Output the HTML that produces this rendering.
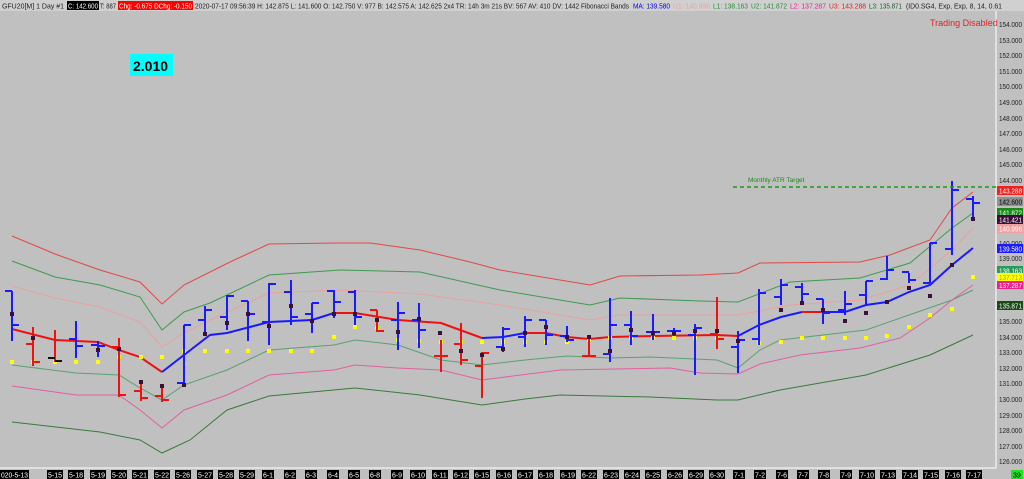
<!DOCTYPE html>
<html><head><meta charset="utf-8"><style>
body{margin:0;width:1024px;height:479px;overflow:hidden;background:#c0c0c0;font-family:"Liberation Sans",sans-serif}
svg{display:block}
</style></head><body>
<svg width="1024" height="479" viewBox="0 0 1024 479" xmlns="http://www.w3.org/2000/svg" font-family="Liberation Sans, sans-serif">
<rect width="1024" height="479" fill="#c0c0c0"/>
<rect width="1024" height="11" fill="#d0d0d0"/>
<g font-size="7.4" fill="#222" lengthAdjust="spacingAndGlyphs">
<text x="2" y="8.5" textLength="62" lengthAdjust="spacingAndGlyphs">GFU20[M]  1 Day  #1</text>
<rect x="67" y="1" width="32" height="9" fill="#000"/><text x="68" y="8.5" fill="#fff" textLength="30" lengthAdjust="spacingAndGlyphs">C: 142.600</text>
<text x="100" y="8.5" textLength="16" lengthAdjust="spacingAndGlyphs">T: 887</text>
<rect x="118" y="1" width="75" height="9" fill="#f00"/><text x="119" y="8.5" fill="#fff" textLength="73" lengthAdjust="spacingAndGlyphs">Chg: -0.675  DChg: -0.150</text>
<text x="195" y="8.5" textLength="434" lengthAdjust="spacingAndGlyphs">2020-07-17 09:56:39 H: 142.875 L: 141.600 O: 142.750 V: 977 B: 142.575 A: 142.625 2x4 TR: 14h 3m 21s BV: 567 AV: 410 DV: 1442 Fibonacci Bands</text>
<text x="633" y="8.5" fill="#0000e0" textLength="37" lengthAdjust="spacingAndGlyphs">MA: 139.580</text>
<text x="673" y="8.5" fill="#f0a0a0" textLength="37" lengthAdjust="spacingAndGlyphs">U1: 140.996</text>
<text x="713" y="8.5" fill="#2a8a3a" textLength="35" lengthAdjust="spacingAndGlyphs">L1: 138.163</text>
<text x="751" y="8.5" fill="#2a8a3a" textLength="36" lengthAdjust="spacingAndGlyphs">U2: 141.872</text>
<text x="790" y="8.5" fill="#e0208a" textLength="36" lengthAdjust="spacingAndGlyphs">L2: 137.287</text>
<text x="829" y="8.5" fill="#e02020" textLength="37" lengthAdjust="spacingAndGlyphs">U3: 143.288</text>
<text x="869" y="8.5" fill="#1a5a2a" textLength="33" lengthAdjust="spacingAndGlyphs">L3: 135.871</text>
<text x="906" y="8.5" textLength="96" lengthAdjust="spacingAndGlyphs">(ID0.SG4, Exp, Exp, 8, 14, 0.61</text>
</g>
<line x1="996" y1="11" x2="996" y2="468" stroke="#fff"/>
<line x1="0" y1="468" x2="996" y2="468" stroke="#fff"/>
<text x="930" y="26" font-size="9" fill="#e02020">Trading Disabled</text>
<rect x="130" y="54" width="43" height="22" fill="#00ffff"/>
<text x="133" y="71" font-size="14" font-weight="bold" fill="#000">2.010</text>
<g fill="none" stroke-width="1">
<polyline stroke="#e04848" points="12,236 55,254 100,270 140,282 162,304 184,285 230,262 269,244 335,243 370,243 420,250 470,262 500,270 590,285 620,276 700,275 738,273 760,263 860,262 890,255 930,240 952,208 973,192"/>
<polyline stroke="#3e9a50" points="12,261 55,277 100,285 140,297 162,330 184,312 210,303 269,275 340,270 420,272 500,290 590,305 620,298 700,301 738,302 790,282 860,278 910,263 952,228 973,213"/>
<polyline stroke="#eaa0a0" points="12,286 55,298 100,307 140,322 162,347 184,333 210,320 269,293 340,290 420,294 500,305 590,320 620,315 700,315 738,315 790,305 860,300 910,285 952,250 973,228"/>
<polyline stroke="#5aa070" points="12,365 76,373 119,375 140,388 162,400 184,385 227,370 269,350 334,345 355,340 398,345 441,360 482,365 525,360 567,356 610,358 650,357 717,360 738,368 760,350 780,340 823,335 866,330 909,315 952,300 973,290"/>
<polyline stroke="#e060a0" points="12,386 76,395 119,395 140,410 162,428 184,410 227,395 269,375 334,370 355,365 398,368 441,370 482,380 560,370 670,368 700,373 738,374 760,364 800,355 860,348 900,338 930,318 952,300 973,285"/>
<polyline stroke="#3a7a3a" points="12,422 100,432 140,440 162,453 190,440 227,410 269,396 355,388 420,395 482,405 525,399 560,395 650,397 717,400 738,400 780,390 866,375 930,355 973,335"/>
</g>
<g fill="none" stroke-width="2">
<polyline stroke="#f01010" points="12,329 55,340 98,342 119,350 140,357 162,372"/>
<polyline stroke="#1a1aff" points="162,372 184,355 210,335 227,333 269,322 312,320 334,313"/>
<polyline stroke="#f01010" points="334,313 355,313 398,320 441,323 482,338"/>
<polyline stroke="#1a1aff" points="482,338 503,337 525,333"/>
<polyline stroke="#f01010" points="525,333 546,333 567,337 589,339 610,337 653,336 717,335 738,336"/>
<polyline stroke="#1a1aff" points="738,336 759,325 781,317 802,312"/>
<polyline stroke="#f01010" points="802,312 823,312"/>
<polyline stroke="#1a1aff" points="823,312 845,312 866,305 887,302 909,292 930,285 952,265 973,248"/>
</g>
<g fill="#ffff00">
<rect x="10" y="360" width="4" height="4"/><rect x="31" y="360" width="4" height="4"/><rect x="53" y="360" width="4" height="4"/><rect x="74" y="360" width="4" height="4"/><rect x="96" y="360" width="4" height="4"/><rect x="117" y="355" width="4" height="4"/><rect x="139" y="355" width="4" height="4"/><rect x="160" y="355" width="4" height="4"/><rect x="182" y="349" width="4" height="4"/><rect x="203" y="349" width="4" height="4"/><rect x="225" y="349" width="4" height="4"/><rect x="246" y="349" width="4" height="4"/><rect x="267" y="349" width="4" height="4"/><rect x="289" y="349" width="4" height="4"/><rect x="310" y="349" width="4" height="4"/><rect x="332" y="335" width="4" height="4"/><rect x="353" y="325" width="4" height="4"/><rect x="375" y="326" width="4" height="4"/><rect x="396" y="338" width="4" height="4"/><rect x="417" y="339" width="4" height="4"/><rect x="439" y="340" width="4" height="4"/><rect x="459" y="340" width="4" height="4"/><rect x="480" y="340" width="4" height="4"/><rect x="501" y="340" width="4" height="4"/><rect x="523" y="340" width="4" height="4"/><rect x="544" y="340" width="4" height="4"/><rect x="565" y="340" width="4" height="4"/><rect x="587" y="338" width="4" height="4"/><rect x="608" y="336" width="4" height="4"/><rect x="629" y="336" width="4" height="4"/><rect x="651" y="336" width="4" height="4"/><rect x="672" y="336" width="4" height="4"/><rect x="693" y="336" width="4" height="4"/><rect x="715" y="336" width="4" height="4"/><rect x="736" y="339" width="4" height="4"/><rect x="757" y="341" width="4" height="4"/><rect x="779" y="340" width="4" height="4"/><rect x="800" y="336" width="4" height="4"/><rect x="821" y="336" width="4" height="4"/><rect x="843" y="336" width="4" height="4"/><rect x="864" y="336" width="4" height="4"/><rect x="885" y="334" width="4" height="4"/><rect x="907" y="325" width="4" height="4"/><rect x="928" y="313" width="4" height="4"/><rect x="950" y="307" width="4" height="4"/><rect x="971" y="275" width="4" height="4"/>
</g>
<g stroke-width="2" fill="none">
<path stroke="#1a1aff" d="M12 291V341M5 291H12M12 325H19 M76 321V358M69 339H76M76 346H83 M98 341V357M91 345H98M98 346H105 M184 325V385M177 383H184M184 325H191 M205 306V335M198 320H205M205 310H212 M227 295V330M220 317H227M227 296H234 M248 301V341M241 301H248M248 314H255 M269 283V345M262 322H269M269 284H276 M291 280V325M284 292H291M291 317H298 M312 303V333M305 314H312M312 303H319 M334 290V318M327 291H334M334 302H341 M355 290V325M348 292H355M355 317H362 M398 302V350M391 320H398M398 313H405 M419 303V348M412 320H419M419 330H426 M503 327V352M496 347H503M503 329H510 M525 316V347M518 337H525M525 320H532 M546 320V345M539 320H546M546 335H553 M567 326V342M560 336H567M567 340H574 M610 298V362M603 354H610M610 325H617 M631 311V345M624 325H631M631 336H638 M653 314V340M646 332H653M653 332H660 M674 328V336M667 331H674M674 331H681 M695 324V375M688 335H695M695 328H702 M738 331V373M731 347H738M738 340H745 M759 289V345M752 339H759M759 293H766 M781 279V305M774 297H781M781 285H788 M802 283V305M795 287H802M802 294H809 M823 299V324M816 299H823M823 313H830 M845 291V315M838 310H845M845 304H852 M866 281V306M859 295H866M866 281H873 M887 256V280M880 279H887M887 270H894 M909 273V283M902 272H909M909 280H916 M930 243V283M923 283H930M930 243H937 M952 181V255M945 249H952M952 190H959 M973 196V218M966 199H973M973 203H980"/>
<path stroke="#f01010" d="M33 327V366M26 344H33M33 362H40 M55 330V362 M119 338V397M112 347H119M119 395H126 M141 381V401M134 391H141M141 398H148 M162 385V402M155 396H162M162 400H169 M377 310V332M370 310H377M377 331H384 M441 340V372M434 356H441M441 356H448 M461 323V365M454 344H461M461 360H468 M482 352V398M475 366H482M482 353H489 M589 335V357M582 356H589M589 356H596 M717 297V349M710 334H717M717 339H724"/>
<path stroke="#111" d="M48 358H55M55 361H62"/>
</g>
<g fill="#3a1038">
<rect x="10" y="312" width="4" height="4"/><rect x="31" y="336" width="4" height="4"/><rect x="96" y="348" width="4" height="4"/><rect x="117" y="347" width="4" height="4"/><rect x="139" y="380" width="4" height="4"/><rect x="160" y="384" width="4" height="4"/><rect x="182" y="383" width="4" height="4"/><rect x="203" y="332" width="4" height="4"/><rect x="225" y="321" width="4" height="4"/><rect x="246" y="312" width="4" height="4"/><rect x="267" y="324" width="4" height="4"/><rect x="289" y="304" width="4" height="4"/><rect x="310" y="319" width="4" height="4"/><rect x="332" y="312" width="4" height="4"/><rect x="353" y="312" width="4" height="4"/><rect x="375" y="318" width="4" height="4"/><rect x="396" y="330" width="4" height="4"/><rect x="417" y="317" width="4" height="4"/><rect x="438" y="331" width="4" height="4"/><rect x="459" y="349" width="4" height="4"/><rect x="480" y="353" width="4" height="4"/><rect x="501" y="347" width="4" height="4"/><rect x="523" y="331" width="4" height="4"/><rect x="544" y="325" width="4" height="4"/><rect x="565" y="335" width="4" height="4"/><rect x="587" y="335" width="4" height="4"/><rect x="608" y="349" width="4" height="4"/><rect x="629" y="328" width="4" height="4"/><rect x="651" y="331" width="4" height="4"/><rect x="672" y="331" width="4" height="4"/><rect x="693" y="329" width="4" height="4"/><rect x="715" y="329" width="4" height="4"/><rect x="736" y="339" width="4" height="4"/><rect x="779" y="308" width="4" height="4"/><rect x="800" y="301" width="4" height="4"/><rect x="821" y="308" width="4" height="4"/><rect x="843" y="319" width="4" height="4"/><rect x="864" y="311" width="4" height="4"/><rect x="885" y="300" width="4" height="4"/><rect x="907" y="286" width="4" height="4"/><rect x="928" y="294" width="4" height="4"/><rect x="950" y="263" width="4" height="4"/><rect x="971" y="217" width="4" height="4"/>
</g>
<line x1="733" y1="187" x2="996" y2="187" stroke="#1a9a1a" stroke-width="1.5" stroke-dasharray="4,3"/>
<text x="748" y="182" font-size="6.5" fill="#1a8a1a">Monthly ATR Target</text>
<g font-size="7.2" fill="#222">
<text x="999" y="27" textLength="23" lengthAdjust="spacingAndGlyphs">154.000</text><text x="999" y="43" textLength="23" lengthAdjust="spacingAndGlyphs">153.000</text><text x="999" y="58" textLength="23" lengthAdjust="spacingAndGlyphs">152.000</text><text x="999" y="74" textLength="23" lengthAdjust="spacingAndGlyphs">151.000</text><text x="999" y="89" textLength="23" lengthAdjust="spacingAndGlyphs">150.000</text><text x="999" y="105" textLength="23" lengthAdjust="spacingAndGlyphs">149.000</text><text x="999" y="121" textLength="23" lengthAdjust="spacingAndGlyphs">148.000</text><text x="999" y="136" textLength="23" lengthAdjust="spacingAndGlyphs">147.000</text><text x="999" y="152" textLength="23" lengthAdjust="spacingAndGlyphs">146.000</text><text x="999" y="167" textLength="23" lengthAdjust="spacingAndGlyphs">145.000</text><text x="999" y="183" textLength="23" lengthAdjust="spacingAndGlyphs">144.000</text><text x="999" y="246" textLength="23" lengthAdjust="spacingAndGlyphs">140.000</text><text x="999" y="261" textLength="23" lengthAdjust="spacingAndGlyphs">139.000</text><text x="999" y="324" textLength="23" lengthAdjust="spacingAndGlyphs">135.000</text><text x="999" y="340" textLength="23" lengthAdjust="spacingAndGlyphs">134.000</text><text x="999" y="355" textLength="23" lengthAdjust="spacingAndGlyphs">133.000</text><text x="999" y="371" textLength="23" lengthAdjust="spacingAndGlyphs">132.000</text><text x="999" y="386" textLength="23" lengthAdjust="spacingAndGlyphs">131.000</text><text x="999" y="402" textLength="23" lengthAdjust="spacingAndGlyphs">130.000</text><text x="999" y="418" textLength="23" lengthAdjust="spacingAndGlyphs">129.000</text><text x="999" y="433" textLength="23" lengthAdjust="spacingAndGlyphs">128.000</text><text x="999" y="449" textLength="23" lengthAdjust="spacingAndGlyphs">127.000</text><text x="999" y="464" textLength="23" lengthAdjust="spacingAndGlyphs">126.000</text>
</g>
<g font-size="7.2">
<rect x="997" y="186" width="26" height="9" fill="#f02020"/><text x="999" y="193.5" fill="#fff" textLength="23" lengthAdjust="spacingAndGlyphs">143.288</text>
<rect x="997" y="197" width="26" height="9" fill="#909090"/><text x="999" y="204.5" fill="#000" textLength="23" lengthAdjust="spacingAndGlyphs">142.600</text>
<rect x="997" y="208" width="26" height="9" fill="#1a8a1a"/><text x="999" y="215.5" fill="#fff" textLength="23" lengthAdjust="spacingAndGlyphs">141.872</text>
<rect x="997" y="215" width="26" height="9" fill="#3a1038"/><text x="999" y="222.5" fill="#fff" textLength="23" lengthAdjust="spacingAndGlyphs">141.421</text>
<rect x="997" y="224" width="26" height="9" fill="#f0a0a0"/><text x="999" y="231.5" fill="#fff" textLength="23" lengthAdjust="spacingAndGlyphs">140.996</text>
<rect x="997" y="244" width="26" height="9" fill="#1a1aff"/><text x="999" y="251.5" fill="#fff" textLength="23" lengthAdjust="spacingAndGlyphs">139.580</text>
<rect x="997" y="266" width="26" height="9" fill="#2a9a5a"/><text x="999" y="273.5" fill="#fff" textLength="23" lengthAdjust="spacingAndGlyphs">138.163</text>
<rect x="997" y="273" width="26" height="8" fill="#ffff00"/><text x="999" y="280" fill="#c0a000" textLength="23" lengthAdjust="spacingAndGlyphs">137.713</text>
<rect x="997" y="281" width="26" height="8" fill="#f0208a"/><text x="999" y="288" fill="#fff" textLength="23" lengthAdjust="spacingAndGlyphs">137.287</text>
<rect x="997" y="301" width="26" height="9" fill="#1a4a1a"/><text x="999" y="308.5" fill="#fff" textLength="23" lengthAdjust="spacingAndGlyphs">135.871</text>
</g>
<g font-size="7" fill="#fff">
<rect x="0" y="470" width="29" height="9" fill="#000"/><text x="1" y="477.5" textLength="27" lengthAdjust="spacingAndGlyphs">020-5-13</text>
</g>
<g font-size="7" fill="#fff" text-anchor="middle">
<g fill="#000">
<rect x="47" y="470" width="16" height="9"/><rect x="68" y="470" width="16" height="9"/><rect x="90" y="470" width="16" height="9"/><rect x="111" y="470" width="16" height="9"/><rect x="132" y="470" width="16" height="9"/><rect x="154" y="470" width="16" height="9"/><rect x="175" y="470" width="16" height="9"/><rect x="197" y="470" width="16" height="9"/><rect x="218" y="470" width="16" height="9"/><rect x="239" y="470" width="16" height="9"/><rect x="262" y="470" width="12" height="9"/><rect x="284" y="470" width="12" height="9"/><rect x="305" y="470" width="12" height="9"/><rect x="327" y="470" width="12" height="9"/><rect x="348" y="470" width="12" height="9"/><rect x="369" y="470" width="12" height="9"/><rect x="391" y="470" width="12" height="9"/><rect x="410" y="470" width="16" height="9"/><rect x="432" y="470" width="16" height="9"/><rect x="453" y="470" width="16" height="9"/><rect x="474" y="470" width="16" height="9"/><rect x="496" y="470" width="16" height="9"/><rect x="517" y="470" width="16" height="9"/><rect x="538" y="470" width="16" height="9"/><rect x="560" y="470" width="16" height="9"/><rect x="581" y="470" width="16" height="9"/><rect x="603" y="470" width="16" height="9"/><rect x="624" y="470" width="16" height="9"/><rect x="645" y="470" width="16" height="9"/><rect x="667" y="470" width="16" height="9"/><rect x="688" y="470" width="16" height="9"/><rect x="709" y="470" width="16" height="9"/><rect x="733" y="470" width="12" height="9"/><rect x="754" y="470" width="12" height="9"/><rect x="776" y="470" width="12" height="9"/><rect x="797" y="470" width="12" height="9"/><rect x="818" y="470" width="12" height="9"/><rect x="840" y="470" width="12" height="9"/><rect x="859" y="470" width="16" height="9"/><rect x="880" y="470" width="16" height="9"/><rect x="902" y="470" width="16" height="9"/><rect x="923" y="470" width="16" height="9"/><rect x="945" y="470" width="16" height="9"/><rect x="966" y="470" width="16" height="9"/>
</g>
<text x="55" y="477.5">5-15</text><text x="76" y="477.5">5-18</text><text x="98" y="477.5">5-19</text><text x="119" y="477.5">5-20</text><text x="140" y="477.5">5-21</text><text x="162" y="477.5">5-22</text><text x="183" y="477.5">5-26</text><text x="205" y="477.5">5-27</text><text x="226" y="477.5">5-28</text><text x="247" y="477.5">5-29</text><text x="268" y="477.5">6-1</text><text x="290" y="477.5">6-2</text><text x="311" y="477.5">6-3</text><text x="333" y="477.5">6-4</text><text x="354" y="477.5">6-5</text><text x="375" y="477.5">6-8</text><text x="397" y="477.5">6-9</text><text x="418" y="477.5">6-10</text><text x="440" y="477.5">6-11</text><text x="461" y="477.5">6-12</text><text x="482" y="477.5">6-15</text><text x="504" y="477.5">6-16</text><text x="525" y="477.5">6-17</text><text x="546" y="477.5">6-18</text><text x="568" y="477.5">6-19</text><text x="589" y="477.5">6-22</text><text x="611" y="477.5">6-23</text><text x="632" y="477.5">6-24</text><text x="653" y="477.5">6-25</text><text x="675" y="477.5">6-26</text><text x="696" y="477.5">6-29</text><text x="717" y="477.5">6-30</text><text x="739" y="477.5">7-1</text><text x="760" y="477.5">7-2</text><text x="782" y="477.5">7-6</text><text x="803" y="477.5">7-7</text><text x="824" y="477.5">7-8</text><text x="846" y="477.5">7-9</text><text x="867" y="477.5">7-10</text><text x="888" y="477.5">7-13</text><text x="910" y="477.5">7-14</text><text x="931" y="477.5">7-15</text><text x="953" y="477.5">7-16</text><text x="974" y="477.5">7-17</text>
</g>
<rect x="1011" y="470" width="12" height="9" fill="#20e020"/><text x="1013" y="477.5" font-size="7" fill="#000">39</text>
</svg>
</body></html>
